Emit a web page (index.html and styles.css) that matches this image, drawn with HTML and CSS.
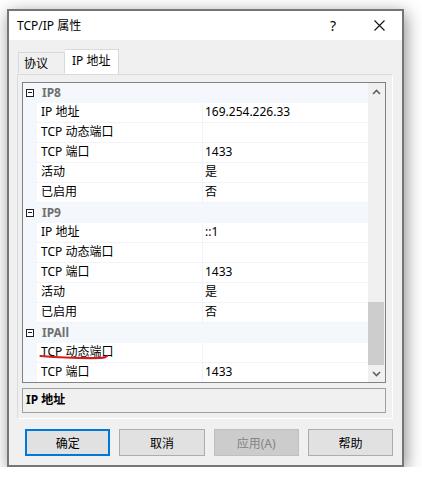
FILE: index.html
```html
<!DOCTYPE html>
<html>
<head>
    <title>TCP/IP 属性</title>
    <meta charset="UTF-8">
    <link rel="stylesheet" href="styles.css">
</head>
<body>
    <div class="window">
        <div class="titlebar">
            <span class="title">TCP/IP 属性</span>
            <span class="caption-btn help">?</span>
            <span class="caption-btn close">
                <svg width="11" height="11" viewBox="0 0 11 11"><path d="M0.5 0.5 L10.5 10.5 M10.5 0.5 L0.5 10.5" stroke="#111" stroke-width="1.1" fill="none"/></svg>
            </span>
        </div>

        <div class="client">
            <div class="tabs">
                <div class="tab">协议</div>
                <div class="tab active">IP 地址</div>
            </div>

            <div class="panel">
                <div class="grid">
                    <div class="rows">
                        <!-- IP8 -->
                        <div class="row group"><span class="toggle"></span><span class="group-name">IP8</span></div>
                        <div class="row"><span class="indent"></span><span class="name">IP 地址</span><span class="value">169.254.226.33</span></div>
                        <div class="row"><span class="indent"></span><span class="name">TCP 动态端口</span><span class="value"></span></div>
                        <div class="row"><span class="indent"></span><span class="name">TCP 端口</span><span class="value">1433</span></div>
                        <div class="row"><span class="indent"></span><span class="name">活动</span><span class="value">是</span></div>
                        <div class="row"><span class="indent"></span><span class="name">已启用</span><span class="value">否</span></div>
                        <!-- IP9 -->
                        <div class="row group"><span class="toggle"></span><span class="group-name">IP9</span></div>
                        <div class="row"><span class="indent"></span><span class="name">IP 地址</span><span class="value">::1</span></div>
                        <div class="row"><span class="indent"></span><span class="name">TCP 动态端口</span><span class="value"></span></div>
                        <div class="row"><span class="indent"></span><span class="name">TCP 端口</span><span class="value">1433</span></div>
                        <div class="row"><span class="indent"></span><span class="name">活动</span><span class="value">是</span></div>
                        <div class="row"><span class="indent"></span><span class="name">已启用</span><span class="value">否</span></div>
                        <!-- IPAll -->
                        <div class="row group"><span class="toggle"></span><span class="group-name">IPAll</span></div>
                        <div class="row"><span class="indent"></span><span class="name">TCP 动态端口</span><span class="value"></span></div>
                        <div class="row"><span class="indent"></span><span class="name">TCP 端口</span><span class="value">1433</span></div>
                    </div>
                    <div class="scrollbar">
                        <div class="arrow">
                            <svg width="9" height="6" viewBox="0 0 9 6"><path d="M1 5 L4.5 1.5 L8 5" stroke="#606060" stroke-width="1.6" fill="none"/></svg>
                        </div>
                        <div class="track"><div class="thumb"></div></div>
                        <div class="arrow">
                            <svg width="9" height="6" viewBox="0 0 9 6"><path d="M1 1 L4.5 4.5 L8 1" stroke="#606060" stroke-width="1.6" fill="none"/></svg>
                        </div>
                    </div>
                    <svg class="mark" viewBox="0 0 364 301"><path d="M17.5 273 C 30 274, 55 275.5, 78 275 C 81 275, 83 274, 84 273" stroke="#d8191c" stroke-width="2.2" fill="none" stroke-linecap="round"/></svg>
                </div>
                <div class="desc">IP 地址</div>
            </div>

            <div class="buttons">
                <button class="btn default">确定</button>
                <button class="btn">取消</button>
                <button class="btn" disabled>应用(A)</button>
                <button class="btn">帮助</button>
            </div>
        </div>
    </div>
</body>
</html>
```

FILE: styles.css
```css
body {
    margin: 0;
    background: #ffffff;
    font-family: "Noto Sans", "Noto Sans CJK SC", sans-serif;
    font-size: 12px;
    color: #000000;
}

.window {
    margin: 9px 0 0 7px;
    width: 393px;
    height: 454px;
    border: 2px solid #767676;
    background: #f0f0f0;
    box-shadow: 2px 4px 16px rgba(0,0,0,0.45);
    display: flex;
    flex-direction: column;
}

.titlebar {
    height: 29px;
    background: #ffffff;
    display: flex;
    align-items: center;
    padding-left: 8px;
}

.title {
    flex: 1;
    line-height: 16px;
}

.caption-btn {
    width: 46px;
    height: 29px;
    display: flex;
    align-items: center;
    justify-content: center;
}

.help {
    font-size: 14px;
}

.client {
    flex: 1;
    padding: 9px 9px 0 8px;
}

.tabs {
    display: flex;
    align-items: flex-end;
    height: 25px;
    padding-left: 1px;
}

.tab {
    height: 20px;
    margin-bottom: 1px;
    padding: 0 7px 0 5px;
    border: 1px solid #d9d9d9;
    border-bottom: none;
    background: #f0f0f0;
    line-height: 21px;
    width: 33px;
}

.tab.active {
    height: 24px;
    margin-bottom: 0;
    width: 40px;
    padding: 0 6px 0 7px;
    background: #ffffff;
    border-left: none;
    line-height: 22px;
}

.panel {
    border: 1px solid #dadada;
    border-right-color: #ffffff;
    border-bottom-color: #ffffff;
    padding: 7px 6px 5px 4px;
    height: 331px;
}

.grid {
    position: relative;
    height: 299px;
    border: 1px solid #828282;
    background: #ffffff;
    display: flex;
    overflow: hidden;
}

.rows {
    flex: 1;
}

.row {
    display: grid;
    grid-template-columns: 14px 166px 1fr;
    height: 20px;
    line-height: 18px;
}

.indent {
    background: #f4f7fc;
}

.name {
    padding-left: 4px;
    border-right: 1px solid #f0f3f8;
    border-bottom: 1px solid #f0f3f8;
    white-space: nowrap;
}

.value {
    padding-left: 2px;
    border-bottom: 1px solid #f0f3f8;
}

.row.group {
    background: #f4f7fc;
    grid-template-columns: 19px 1fr;
    align-items: center;
}

.toggle {
    width: 6px;
    height: 6px;
    margin-left: 3px;
    margin-bottom: 1px;
    border: 1px solid #222222;
    position: relative;
    background: #ffffff;
}

.toggle::after {
    content: "";
    position: absolute;
    left: 1px;
    top: 2.5px;
    width: 4px;
    height: 1px;
    background: #222222;
}

.group-name {
    font-weight: bold;
    color: #707070;
    line-height: 18px;
    margin-bottom: 1px;
}

.scrollbar {
    width: 17px;
    background: #f0f0f0;
    display: flex;
    flex-direction: column;
}

.arrow {
    height: 17px;
    display: flex;
    align-items: center;
    justify-content: center;
}

.track {
    flex: 1;
    display: flex;
    flex-direction: column;
    justify-content: flex-end;
}

.thumb {
    height: 63px;
    margin: 0 1px 0 0;
    background: #cdcdcd;
}

.mark {
    position: absolute;
    left: 0;
    top: 0;
    width: 364px;
    height: 301px;
    pointer-events: none;
}

.desc {
    margin-top: 5px;
    height: 23px;
    border: 1px solid #a0a0a0;
    padding-left: 3px;
    font-weight: bold;
    line-height: 22px;
}

.buttons {
    display: flex;
    gap: 9px;
    padding-left: 8px;
    margin-top: 10px;
}

.btn {
    width: 86px;
    height: 27px;
    background: #e1e1e1;
    border: 1px solid #adadad;
    font-family: inherit;
    font-size: 12px;
    color: #000000;
    padding: 0;
}

.btn.default {
    border: 2px solid #0078d7;
}

.btn:disabled {
    background: #cccccc;
    border-color: #bfbfbf;
    color: #838383;
}
```
